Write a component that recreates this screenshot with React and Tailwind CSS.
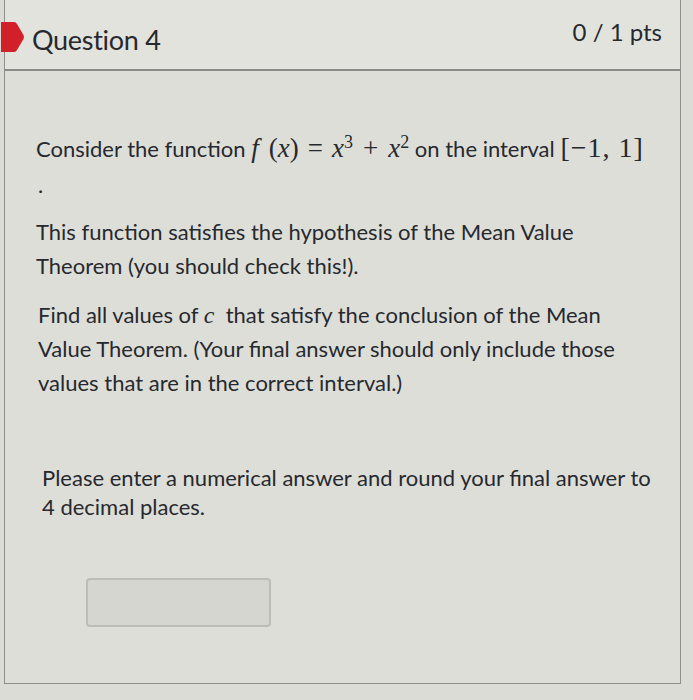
export default function App() {
  const math = { fontFamily: '"Liberation Serif", "DejaVu Serif", serif' };

  return (
    <div className="w-[693px] h-[700px] bg-[#dcdcd7] overflow-hidden font-['Lato',sans-serif] text-[#26292d]">
      <div className="relative ml-[4px] w-[677px] h-[684px] border-l border-r border-b border-[#8f8f8c] bg-[#deded9]">
        {/* header */}
        <div className="relative flex items-center justify-between h-[71px] border-b-2 border-[#8a8a87] bg-[#e3e3de] pl-[27px] pr-[18px]">
          <svg
            className="absolute -left-[4px] top-[21px]"
            width="24"
            height="32"
            viewBox="0 0 24 32"
          >
            <path d="M0 1 H13 Q15 1 16 3 L22.5 14 Q23.5 16 22.5 18 L16 29 Q15 31 13 31 H0 Z" fill="#d2202b" />
          </svg>
          <div className="text-[27px] leading-none mt-[10px] tracking-[-0.3px]">Question 4</div>
          <div className="text-[24px] leading-none -mt-[6px]">0 / 1 pts</div>
        </div>

        {/* body */}
        <div className="pl-[31px] text-[22px] leading-[34px]">
          <p className="mt-[60px] whitespace-nowrap">
            Consider the function{' '}
            <span style={math} className="text-[27px]">
              <i>f</i>
              <span className="ml-[10px]">(</span>
              <i>x</i>)<span className="mx-[9px]">=</span>
              <i>x</i>
              <sup className="text-[18px]">3</sup>
              <span className="mx-[10px]">+</span>
              <i>x</i>
              <sup className="text-[18px]">2</sup>
            </span>{' '}
            on the interval{' '}
            <span style={math} className="text-[28px] tracking-[1px]">
              [−1,&nbsp;1]
            </span>
          </p>
          <p className="pl-[2px] mt-[2px]">.</p>

          <p className="mt-[13px] whitespace-nowrap">
            This function satisfies the hypothesis of the Mean Value
            <br />
            Theorem (you should check this!).
          </p>

          <p className="mt-[15px] pl-[2px] whitespace-nowrap">
            Find all values of{' '}
            <i style={math} className="text-[24px]">
              c
            </i>
            &nbsp; that satisfy the conclusion of the Mean
            <br />
            Value Theorem. (Your final answer should only include those
            <br />
            values that are in the correct interval.)
          </p>

          <p className="mt-[63px] pl-[6px] whitespace-nowrap leading-[29px]">
            Please enter a numerical answer and round your final answer to
            <br />
            4 decimal places.
          </p>

          <div className="mt-[57px] ml-[50px] w-[185px] h-[49px] rounded-[4px] border-2 border-[#bdbdb8] bg-[#d6d6d1]" />
        </div>
      </div>
    </div>
  );
}
